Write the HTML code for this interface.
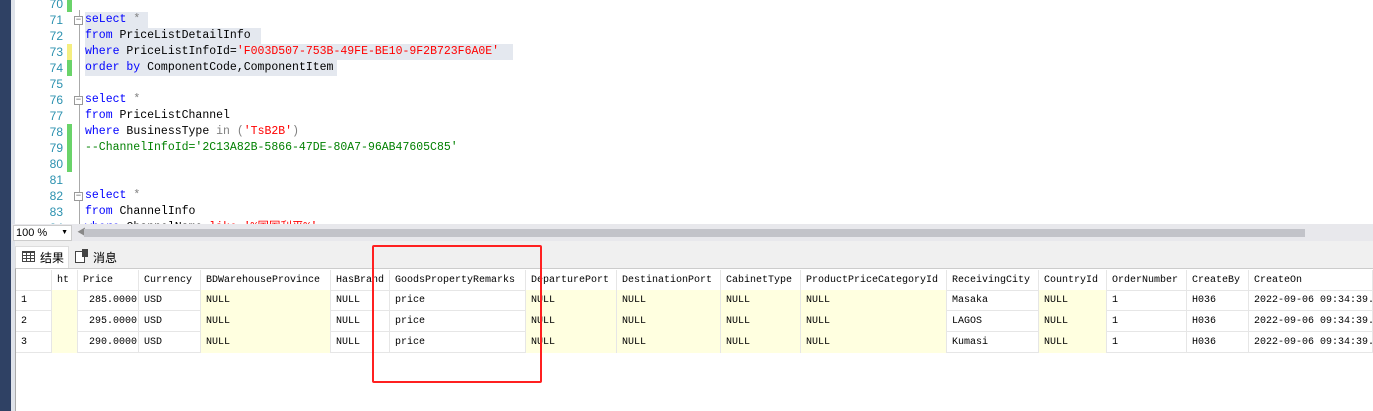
<!DOCTYPE html>
<html><head><meta charset="utf-8"><style>
*{margin:0;padding:0;box-sizing:border-box}
body{width:1373px;height:411px;overflow:hidden;background:#fff;position:relative;font-family:"Liberation Mono","Noto Sans CJK SC",monospace}
.abs{position:absolute}
.ln{position:absolute;left:20px;width:43px;text-align:right;color:#2b91af;font-size:12px;line-height:16px;font-family:"Liberation Sans",sans-serif}
.code{position:absolute;left:85px;font-size:11.5px;line-height:16px;white-space:pre;color:#000}
.k{color:#0000ff}.s{color:#ff0000}.c{color:#008000}.g{color:#808080}
.sel{background:#e4e8ef}
.mk{position:absolute;left:67px;width:5px;height:16px}
.fold{position:absolute;left:74px;width:9px;height:9px;border:1px solid #999;background:#fff;font-size:9px;line-height:7px;text-align:center;color:#555}
.grid{position:absolute;left:16px;top:269px;font-family:"Liberation Mono","Noto Sans CJK SC",monospace;font-size:10px}
.row{position:absolute;left:0;height:21px;border-bottom:1px solid #e6e6e6}
.cell{position:absolute;top:0;height:21px;line-height:22px;padding-left:5px;border-right:1px solid #e6e6e6;white-space:nowrap;overflow:hidden;color:#000}
.y{background:#ffffe0}
</style></head><body>
<div class="abs" style="left:0;top:0;width:11px;height:411px;background:#2f4164"></div>
<div class="abs" style="left:11px;top:0;width:4px;height:411px;background:#dfe3ea"></div>
<div class="abs" style="left:79px;top:10px;width:1px;height:214px;background:#aaa"></div>

<div class="ln" style="top:-4px">70</div>
<div class="ln" style="top:12px">71</div>
<div class="ln" style="top:28px">72</div>
<div class="ln" style="top:44px">73</div>
<div class="ln" style="top:60px">74</div>
<div class="ln" style="top:76px">75</div>
<div class="ln" style="top:92px">76</div>
<div class="ln" style="top:108px">77</div>
<div class="ln" style="top:124px">78</div>
<div class="ln" style="top:140px">79</div>
<div class="ln" style="top:156px">80</div>
<div class="ln" style="top:172px">81</div>
<div class="ln" style="top:188px">82</div>
<div class="ln" style="top:204px">83</div>
<div class="ln" style="top:220px">84</div>

<div class="mk" style="top:-4px;background:#6ad36a"></div>
<div class="mk" style="top:44px;background:#f5ee80"></div>
<div class="mk" style="top:60px;background:#6ad36a"></div>
<div class="mk" style="top:124px;background:#6ad36a"></div>
<div class="mk" style="top:140px;background:#6ad36a"></div>
<div class="mk" style="top:156px;background:#6ad36a"></div>

<div class="fold" style="top:16px">−</div>
<div class="fold" style="top:96px">−</div>
<div class="fold" style="top:192px">−</div>

<div class="code sel" style="top:12px;width:63px"><span class="k">seLect</span> <span class="g">*</span></div>
<div class="code sel" style="top:28px;width:176px"><span class="k">from</span> PriceListDetailInfo</div>
<div class="code sel" style="top:44px;width:428px"><span class="k">where</span> PriceListInfoId=<span class="s">'F003D507-753B-49FE-BE10-9F2B723F6A0E'</span></div>
<div class="code sel" style="top:60px;width:252px"><span class="k">order by</span> ComponentCode,ComponentItem</div>
<div class="code" style="top:92px"><span class="k">select</span> <span class="g">*</span></div>
<div class="code" style="top:108px"><span class="k">from</span> PriceListChannel</div>
<div class="code" style="top:124px"><span class="k">where</span> BusinessType <span class="g">in</span> <span class="g">(</span><span class="s">'TsB2B'</span><span class="g">)</span></div>
<div class="code c" style="top:140px">--ChannelInfoId='2C13A82B-5866-47DE-80A7-96AB47605C85'</div>
<div class="code" style="top:188px"><span class="k">select</span> <span class="g">*</span></div>
<div class="code" style="top:204px"><span class="k">from</span> ChannelInfo</div>
<div class="code" style="top:220px"><span class="k">where</span> ChannelName <span class="s">like '%国国利平%'</span></div>

<div class="abs" style="left:12px;top:224px;width:1361px;height:17px;background:#e8e8ec"></div>
<div class="abs" style="left:13px;top:225px;width:59px;height:16px;background:#fff;border:1px solid #ccc;font-family:'Liberation Sans',sans-serif;font-size:11px;line-height:14px;padding-left:2px">100 %<span style="position:absolute;right:3px;top:0;font-size:7px">▼</span></div>
<div class="abs" style="left:77px;top:228px;font-size:9px;color:#888;line-height:10px">◀</div>
<div class="abs" style="left:84px;top:229px;width:1221px;height:8px;background:#c2c3c9"></div>

<div class="abs" style="left:15px;top:241px;width:1358px;height:28px;background:#f0f0f0"></div>
<div class="abs" style="left:15px;top:246px;width:54px;height:23px;background:#fff;border:1px solid #ddd;border-bottom:none;font-family:'Liberation Sans','Noto Sans CJK SC',sans-serif;font-size:12px;line-height:22px;padding-left:24px">结果</div>
<div class="abs" style="left:22px;top:251px;width:13px;height:11px;border:1px solid #444;background:repeating-linear-gradient(90deg,transparent 0 3px,#444 3px 4px),repeating-linear-gradient(0deg,transparent 0 2px,#444 2px 3px)"></div>
<div class="abs" style="left:93px;top:247px;font-family:'Liberation Sans','Noto Sans CJK SC',sans-serif;font-size:12px;line-height:22px">消息</div>
<div class="abs" style="left:75px;top:251px;width:10px;height:12px;border:1px solid #444;background:#fff"></div>
<div class="abs" style="left:82px;top:249px;width:6px;height:8px;background:#444"></div>

<div class="abs" style="left:15px;top:268px;width:1358px;height:143px;background:#fff;border-top:1px solid #ccc;border-left:1px solid #aaa"></div>
<div class="grid">
<div class="row" style="top:1px;width:1357px">
<div class="cell" style="left:0;width:36px"></div>
<div class="cell" style="left:36px;width:26px">ht</div>
<div class="cell" style="left:62px;width:61px">Price</div>
<div class="cell" style="left:123px;width:62px">Currency</div>
<div class="cell" style="left:185px;width:130px">BDWarehouseProvince</div>
<div class="cell" style="left:315px;width:59px">HasBrand</div>
<div class="cell" style="left:374px;width:136px">GoodsPropertyRemarks</div>
<div class="cell" style="left:510px;width:91px">DeparturePort</div>
<div class="cell" style="left:601px;width:104px">DestinationPort</div>
<div class="cell" style="left:705px;width:80px">CabinetType</div>
<div class="cell" style="left:785px;width:146px">ProductPriceCategoryId</div>
<div class="cell" style="left:931px;width:92px">ReceivingCity</div>
<div class="cell" style="left:1023px;width:68px">CountryId</div>
<div class="cell" style="left:1091px;width:80px">OrderNumber</div>
<div class="cell" style="left:1171px;width:62px">CreateBy</div>
<div class="cell" style="left:1233px;width:124px">CreateOn</div>
</div>
</div>
<div class="grid" style="top:290px">
<div class="row" style="top:0;width:1357px">
<div class="cell" style="left:0;width:36px">1</div><div class="cell y" style="left:36px;width:26px"></div><div class="cell" style="left:62px;width:61px">&nbsp;285.0000</div><div class="cell" style="left:123px;width:62px">USD</div><div class="cell y" style="left:185px;width:130px">NULL</div><div class="cell" style="left:315px;width:59px">NULL</div><div class="cell" style="left:374px;width:136px">price</div><div class="cell y" style="left:510px;width:91px">NULL</div><div class="cell y" style="left:601px;width:104px">NULL</div><div class="cell y" style="left:705px;width:80px">NULL</div><div class="cell y" style="left:785px;width:146px">NULL</div><div class="cell" style="left:931px;width:92px">Masaka</div><div class="cell y" style="left:1023px;width:68px">NULL</div><div class="cell" style="left:1091px;width:80px">1</div><div class="cell" style="left:1171px;width:62px">H036</div><div class="cell" style="left:1233px;width:124px">2022-09-06 09:34:39.</div>
</div>
<div class="row" style="top:21px;width:1357px">
<div class="cell" style="left:0;width:36px">2</div><div class="cell y" style="left:36px;width:26px"></div><div class="cell" style="left:62px;width:61px">&nbsp;295.0000</div><div class="cell" style="left:123px;width:62px">USD</div><div class="cell y" style="left:185px;width:130px">NULL</div><div class="cell" style="left:315px;width:59px">NULL</div><div class="cell" style="left:374px;width:136px">price</div><div class="cell y" style="left:510px;width:91px">NULL</div><div class="cell y" style="left:601px;width:104px">NULL</div><div class="cell y" style="left:705px;width:80px">NULL</div><div class="cell y" style="left:785px;width:146px">NULL</div><div class="cell" style="left:931px;width:92px">LAGOS</div><div class="cell y" style="left:1023px;width:68px">NULL</div><div class="cell" style="left:1091px;width:80px">1</div><div class="cell" style="left:1171px;width:62px">H036</div><div class="cell" style="left:1233px;width:124px">2022-09-06 09:34:39.</div>
</div>
<div class="row" style="top:42px;width:1357px">
<div class="cell" style="left:0;width:36px">3</div><div class="cell y" style="left:36px;width:26px"></div><div class="cell" style="left:62px;width:61px">&nbsp;290.0000</div><div class="cell" style="left:123px;width:62px">USD</div><div class="cell y" style="left:185px;width:130px">NULL</div><div class="cell" style="left:315px;width:59px">NULL</div><div class="cell" style="left:374px;width:136px">price</div><div class="cell y" style="left:510px;width:91px">NULL</div><div class="cell y" style="left:601px;width:104px">NULL</div><div class="cell y" style="left:705px;width:80px">NULL</div><div class="cell y" style="left:785px;width:146px">NULL</div><div class="cell" style="left:931px;width:92px">Kumasi</div><div class="cell y" style="left:1023px;width:68px">NULL</div><div class="cell" style="left:1091px;width:80px">1</div><div class="cell" style="left:1171px;width:62px">H036</div><div class="cell" style="left:1233px;width:124px">2022-09-06 09:34:39.</div>
</div>
</div>

<div class="abs" style="left:372px;top:245px;width:170px;height:138px;border:2px solid #ff2020;border-radius:2px"></div>
</body></html>
